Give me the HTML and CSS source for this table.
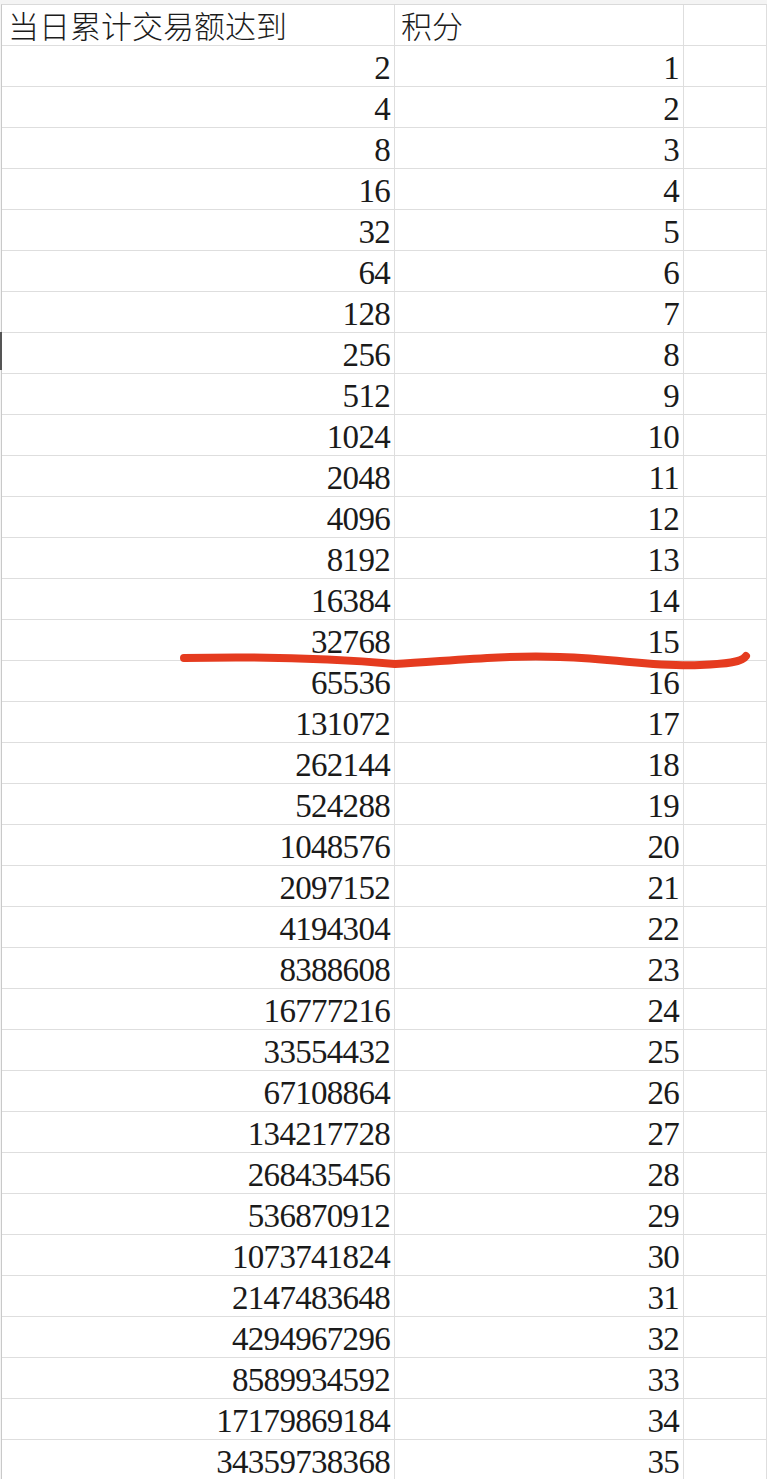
FILE: index.html
```html
<!DOCTYPE html>
<html lang="zh-CN">
<head>
<meta charset="utf-8">
<title>积分表</title>
<link rel="stylesheet" href="styles.css">
</head>
<body>
<div class="page">
  <div class="sheet">
    <div class="cell head">当日累计交易额达到</div><div class="cell head">积分</div><div class="cell"></div>
    <div class="cell num">2</div><div class="cell num">1</div><div class="cell"></div>
    <div class="cell num">4</div><div class="cell num">2</div><div class="cell"></div>
    <div class="cell num">8</div><div class="cell num">3</div><div class="cell"></div>
    <div class="cell num">16</div><div class="cell num">4</div><div class="cell"></div>
    <div class="cell num">32</div><div class="cell num">5</div><div class="cell"></div>
    <div class="cell num">64</div><div class="cell num">6</div><div class="cell"></div>
    <div class="cell num">128</div><div class="cell num">7</div><div class="cell"></div>
    <div class="cell num">256</div><div class="cell num">8</div><div class="cell"></div>
    <div class="cell num">512</div><div class="cell num">9</div><div class="cell"></div>
    <div class="cell num">1024</div><div class="cell num">10</div><div class="cell"></div>
    <div class="cell num">2048</div><div class="cell num">11</div><div class="cell"></div>
    <div class="cell num">4096</div><div class="cell num">12</div><div class="cell"></div>
    <div class="cell num">8192</div><div class="cell num">13</div><div class="cell"></div>
    <div class="cell num">16384</div><div class="cell num">14</div><div class="cell"></div>
    <div class="cell num">32768</div><div class="cell num">15</div><div class="cell"></div>
    <div class="cell num">65536</div><div class="cell num">16</div><div class="cell"></div>
    <div class="cell num">131072</div><div class="cell num">17</div><div class="cell"></div>
    <div class="cell num">262144</div><div class="cell num">18</div><div class="cell"></div>
    <div class="cell num">524288</div><div class="cell num">19</div><div class="cell"></div>
    <div class="cell num">1048576</div><div class="cell num">20</div><div class="cell"></div>
    <div class="cell num">2097152</div><div class="cell num">21</div><div class="cell"></div>
    <div class="cell num">4194304</div><div class="cell num">22</div><div class="cell"></div>
    <div class="cell num">8388608</div><div class="cell num">23</div><div class="cell"></div>
    <div class="cell num">16777216</div><div class="cell num">24</div><div class="cell"></div>
    <div class="cell num">33554432</div><div class="cell num">25</div><div class="cell"></div>
    <div class="cell num">67108864</div><div class="cell num">26</div><div class="cell"></div>
    <div class="cell num">134217728</div><div class="cell num">27</div><div class="cell"></div>
    <div class="cell num">268435456</div><div class="cell num">28</div><div class="cell"></div>
    <div class="cell num">536870912</div><div class="cell num">29</div><div class="cell"></div>
    <div class="cell num">1073741824</div><div class="cell num">30</div><div class="cell"></div>
    <div class="cell num">2147483648</div><div class="cell num">31</div><div class="cell"></div>
    <div class="cell num">4294967296</div><div class="cell num">32</div><div class="cell"></div>
    <div class="cell num">8589934592</div><div class="cell num">33</div><div class="cell"></div>
    <div class="cell num">17179869184</div><div class="cell num">34</div><div class="cell"></div>
    <div class="cell num">34359738368</div><div class="cell num">35</div><div class="cell"></div>
  </div>
  <div class="row-marker"></div>
  <svg class="ink" width="767" height="1479" viewBox="0 0 767 1479" aria-hidden="true">
    <path d="M184,658 C280,656 340,659 395,664 C450,661 500,655 560,657 C620,659 655,667 700,665 C728,664 742,662 746,656" fill="none" stroke="#e53b1f" stroke-width="8" stroke-linecap="round" stroke-linejoin="round"/>
  </svg>
</div>
</body>
</html>
```

FILE: styles.css
```css
html, body {
  margin: 0;
  padding: 0;
  background: #ffffff;
}

.page {
  position: relative;
  width: 767px;
  height: 1479px;
  overflow: hidden;
  background: #f4f4f4;
  padding-top: 4px;
  box-sizing: border-box;
}

.sheet {
  margin-left: 1px;
  display: grid;
  grid-template-columns: 393px 289px 1fr;
  grid-auto-rows: 41px;
  border-top: 1px solid #dadada;
  border-left: 1px solid #c9c9c9;
  background: #ffffff;
}

.cell {
  box-sizing: border-box;
  border-bottom: 1px solid #dedede;
  border-right: 1px solid #dedede;
  white-space: nowrap;
  overflow: hidden;
  color: #1a1a1a;
}

.head {
  overflow: visible;
  font-family: "Noto Sans CJK SC", "Noto Sans", sans-serif;
  font-weight: 300;
  font-size: 31px;
  line-height: 38px;
  padding-top: 1px;
  padding-left: 6px;
  color: #1c1c1c;
}

.num {
  font-family: "Liberation Serif", "Times New Roman", serif;
  font-size: 33px;
  letter-spacing: -0.7px;
  line-height: 36px;
  padding-top: 4px;
  padding-right: 4px;
  text-align: right;
}

.row-marker {
  position: absolute;
  left: 0;
  top: 332px;
  width: 2px;
  height: 38px;
  background: #555555;
}

.ink {
  position: absolute;
  left: 0;
  top: 0;
}
```
